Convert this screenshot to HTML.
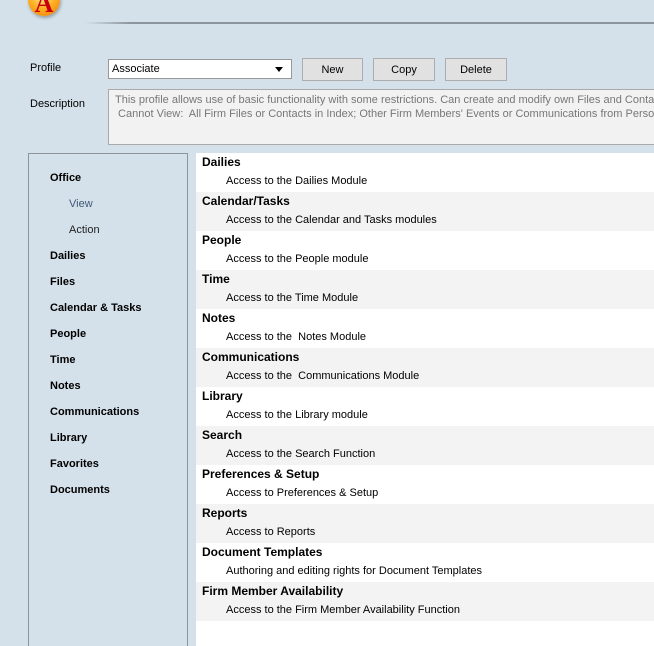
<!DOCTYPE html>
<html style="width:654px;height:646px;overflow:hidden"><head><meta charset="utf-8"><style>
*{margin:0;padding:0;box-sizing:border-box}
body{width:654px;height:646px;overflow:hidden;background:#d5e1ea;font-family:"Liberation Sans",Arial,sans-serif;position:relative;font-size:12px;color:#000}
.abs{position:absolute}
.logo{left:28px;top:-16px;width:32px;height:32px;border-radius:50%;background:radial-gradient(circle at 45% 35%,#ffe9a0 0%,#ffb326 45%,#f07800 100%);box-shadow:1px 2px 3px rgba(0,0,0,.3);text-align:center;font-family:"Liberation Serif",serif;font-weight:bold;color:#c80010;font-size:26px;line-height:40px}
.line{left:85px;top:22px;width:569px;height:2px;background:linear-gradient(90deg,#d5e1ea,#8c959c 8%,#8c959c)}
.lbl{font-size:11px}
.sel{left:108px;top:59px;width:184px;height:20px;background:#fff;border:1px solid #999;font-size:11px;padding:3px 0 0 3px}
.sel:after{content:"";position:absolute;right:8px;top:7px;border-left:4px solid transparent;border-right:4px solid transparent;border-top:5px solid #000}
.btn{top:58px;height:23px;background:#e1e1e1;border:1px solid #adadad;font-size:11px;text-align:center;line-height:23px}
.desc{left:108px;top:89px;width:560px;height:56px;background:#f2f2f2;border:1px solid #aaa;color:#777;font-size:11px;padding:3px 0 0 6px;line-height:14px;white-space:nowrap;overflow:hidden}
.left{left:28px;top:153px;width:160px;height:493px;border:1px solid #8d9499;border-bottom:none}
.left div{position:absolute;font-size:11px;font-weight:bold}
.right{left:196px;top:153px;width:458px;height:493px;background:#fff}
.row{height:39px;position:relative}
.row.g{background:#f3f3f3}
.row b{position:absolute;left:6px;top:2px;font-size:12px}
.row span{position:absolute;left:30px;top:22px;font-size:11px}
</style></head><body>
<div class="abs logo">A</div>
<div class="abs line"></div>
<div class="abs lbl" style="left:30px;top:62px">Profile</div>
<div class="abs lbl" style="left:30px;top:98px">Description</div>
<div class="abs sel">Associate</div>
<div class="abs btn" style="left:302px;width:61px">New</div>
<div class="abs btn" style="left:373px;width:62px">Copy</div>
<div class="abs btn" style="left:445px;width:62px">Delete</div>
<div class="abs desc">This profile allows use of basic functionality with some restrictions. Can create and modify own Files and Contacts.<br>&nbsp;Cannot View:&nbsp; All Firm Files or Contacts in Index; Other Firm Members' Events or Communications from Person; Other</div>
<div class="abs left">
<div style="left:21px;top:18px">Office</div>
<div style="left:40px;top:44px;font-weight:normal;color:#3f5a78">View</div>
<div style="left:40px;top:70px;font-weight:normal;color:#222">Action</div>
<div style="left:21px;top:96px">Dailies</div>
<div style="left:21px;top:122px">Files</div>
<div style="left:21px;top:148px">Calendar &amp; Tasks</div>
<div style="left:21px;top:174px">People</div>
<div style="left:21px;top:200px">Time</div>
<div style="left:21px;top:226px">Notes</div>
<div style="left:21px;top:252px">Communications</div>
<div style="left:21px;top:278px">Library</div>
<div style="left:21px;top:304px">Favorites</div>
<div style="left:21px;top:330px">Documents</div>
</div>
<div class="abs right">
<div class="row"><b>Dailies</b><span>Access to the Dailies Module</span></div>
<div class="row g"><b>Calendar/Tasks</b><span>Access to the Calendar and Tasks modules</span></div>
<div class="row"><b>People</b><span>Access to the People module</span></div>
<div class="row g"><b>Time</b><span>Access to the Time Module</span></div>
<div class="row"><b>Notes</b><span>Access to the&nbsp; Notes Module</span></div>
<div class="row g"><b>Communications</b><span>Access to the&nbsp; Communications Module</span></div>
<div class="row"><b>Library</b><span>Access to the Library module</span></div>
<div class="row g"><b>Search</b><span>Access to the Search Function</span></div>
<div class="row"><b>Preferences &amp; Setup</b><span>Access to Preferences &amp; Setup</span></div>
<div class="row g"><b>Reports</b><span>Access to Reports</span></div>
<div class="row"><b>Document Templates</b><span>Authoring and editing rights for Document Templates</span></div>
<div class="row g"><b>Firm Member Availability</b><span>Access to the Firm Member Availability Function</span></div>
</div>
</body></html>
